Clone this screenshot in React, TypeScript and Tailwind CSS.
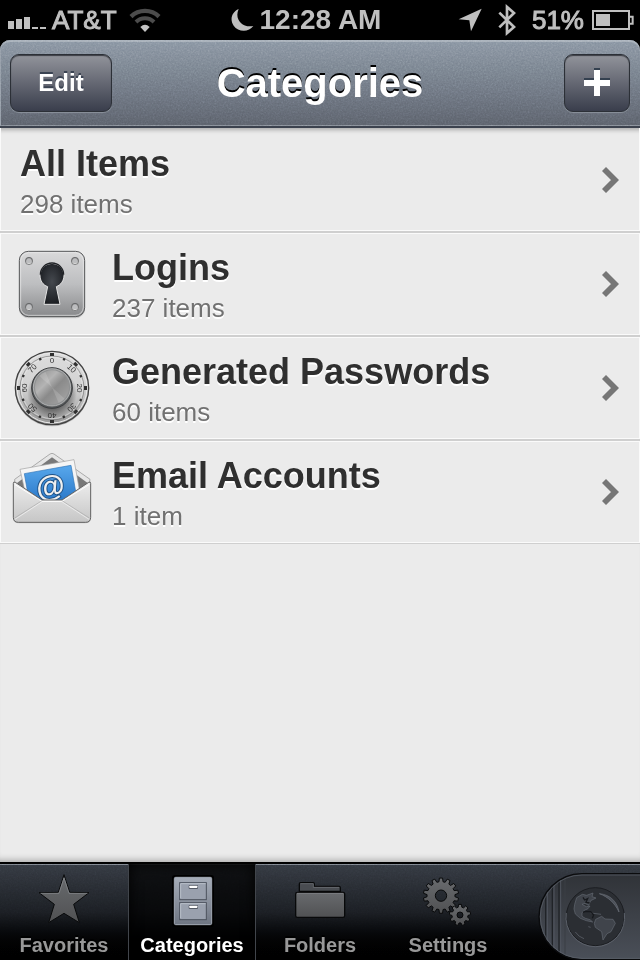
import type { ReactNode } from "react";

type IconProps = { className?: string };

function Grain({ id, opacity }: { id: string; opacity: number }) {
  return (
    <svg className="pointer-events-none absolute inset-0 h-full w-full mix-blend-overlay" aria-hidden="true">
      <filter id={id}>
        <feTurbulence type="fractalNoise" baseFrequency="0.6" numOctaves="2" seed="4" />
        <feColorMatrix type="saturate" values="0" />
      </filter>
      <rect width="100%" height="100%" filter={`url(#${id})`} opacity={opacity} />
    </svg>
  );
}

function SignalIcon() {
  return (
    <svg className="h-5 w-[38px]" viewBox="0 0 38 20" fill="#bfbfbf" aria-hidden="true">
      <path d="M0 11h6v8H0zM8 9h6v10H8zM16 7h6v12h-6zM24 17h6v2h-6zM32 17h6v2h-6z" />
    </svg>
  );
}

function WifiIcon() {
  return (
    <svg className="h-6 w-8" viewBox="390 22 96 72" fill="none" aria-hidden="true">
      <path d="M396 48 A60 60 0 0 1 480 48" stroke="#4c4c4c" strokeWidth="13" />
      <path d="M411 64 A38 38 0 0 1 465 64" stroke="#4c4c4c" strokeWidth="12" />
      <path d="M424 79 Q438 66 452 79 L438 94Z" fill="#c4c4c4" />
    </svg>
  );
}

function MoonIcon() {
  return (
    <svg className="h-6 w-[23px]" viewBox="688 22 69 72" fill="#bfbfbf" aria-hidden="true">
      <path d="M711 25 C697 55 722 83 755 76 C741 96 709 94 696 75 C683 56 691 34 711 25Z" />
    </svg>
  );
}

function LocationIcon() {
  return (
    <svg className="h-6 w-6" viewBox="415 22 72 72" fill="#bfbfbf" aria-hidden="true">
      <path d="M486 24 L454 92 L449 59 L417 56Z" />
    </svg>
  );
}

function BluetoothIcon() {
  return (
    <svg className="h-8 w-[18px]" viewBox="534 10 54 96" fill="none" stroke="#bfbfbf" strokeWidth="8" aria-hidden="true">
      <path d="M538 36 L582 79 L561 97 V19 L582 37 L538 80" />
    </svg>
  );
}

function BatteryIcon() {
  return (
    <svg className="h-5 w-[42px]" viewBox="816 27 126 60" fill="none" stroke="#bfbfbf" strokeWidth="6" aria-hidden="true">
      <path d="M819 30 H927 V84 H819Z" />
      <path d="M929 47 H938 V68 H929" />
      <path d="M828 39 H870 V75 H828Z" fill="#bfbfbf" stroke="none" />
    </svg>
  );
}

function LockIcon() {
  const screws = [[87, 78], [225, 78], [87, 216], [225, 216]];
  return (
    <svg className="size-20" viewBox="36 27 240 240" aria-hidden="true">
      <defs>
        <linearGradient id="plate" x1="0" y1="0" x2="0" y2="1">
          <stop offset="0" stopColor="#d9d9da" />
          <stop offset="0.5" stopColor="#bdbec0" />
          <stop offset="1" stopColor="#88898b" />
        </linearGradient>
        <radialGradient id="hole" cx="0.5" cy="0.45" r="0.6">
          <stop offset="0" stopColor="#45494f" />
          <stop offset="1" stopColor="#191b1f" />
        </radialGradient>
        <linearGradient id="screw" x1="0" y1="0" x2="0" y2="1">
          <stop offset="0" stopColor="#6f7072" />
          <stop offset="1" stopColor="#e8e8e8" />
        </linearGradient>
      </defs>
      <rect x="57" y="52" width="198" height="198" rx="28" fill="#000" opacity="0.13" />
      <rect x="58" y="49" width="196" height="196" rx="27" fill="url(#plate)" stroke="#57585a" strokeWidth="3" />
      <rect x="62" y="53" width="188" height="188" rx="24" fill="none" stroke="#eeeeee" strokeWidth="3" opacity="0.65" />
      {screws.map(([x, y]) => (
        <g key={`${x}-${y}`}>
          <circle cx={x} cy={y} r="11" fill="url(#screw)" stroke="#5c5d5f" strokeWidth="2" />
          <circle cx={x} cy={y - 1} r="7" fill="#bcbdbf" />
        </g>
      ))}
      <path
        d="M143 155 C128 150 120 136 120 121 A36 36 0 0 1 192 121 C192 136 183 150 169 155 L180 208 H132Z"
        fill="url(#hole)"
        stroke="#e3e3e3"
        strokeWidth="3"
      />
      <path d="M121 119 A35 35 0 0 1 191 119" fill="none" stroke="#202226" strokeWidth="4" />
    </svg>
  );
}

function DialIcon() {
  const ticks = Array.from({ length: 16 }, (_, i) => i);
  return (
    <svg className="size-20" viewBox="36 24 240 240" aria-hidden="true">
      <defs>
        <linearGradient id="dial" x1="0" y1="0" x2="0" y2="1">
          <stop offset="0" stopColor="#dddddd" />
          <stop offset="0.5" stopColor="#d2d2d2" />
          <stop offset="1" stopColor="#979797" />
        </linearGradient>
        <linearGradient id="knob" x1="0" y1="0" x2="1" y2="1">
          <stop offset="0" stopColor="#8c8c8c" />
          <stop offset="0.35" stopColor="#b4b4b4" />
          <stop offset="0.55" stopColor="#8a8a8a" />
          <stop offset="1" stopColor="#a8a8a8" />
        </linearGradient>
        <radialGradient id="knobShade">
          <stop offset="0.5" stopColor="#222" stopOpacity="0.7" />
          <stop offset="1" stopColor="#222" stopOpacity="0" />
        </radialGradient>
      </defs>
      <circle cx="156" cy="148" r="111" fill="#000" opacity="0.2" />
      <circle cx="156" cy="144" r="110" fill="url(#dial)" stroke="#414141" strokeWidth="4" />
      <circle cx="156" cy="144" r="105" fill="none" stroke="#e9e9e9" strokeWidth="3" />
      <circle cx="156" cy="144" r="96" fill="none" stroke="#777777" strokeWidth="2" />
      <circle cx="156" cy="144" r="92" fill="none" stroke="#eeeeee" strokeWidth="2" opacity="0.8" />
      {ticks.map((i) => (
        <rect
          key={i}
          x={i % 2 ? 153 : 150}
          y={i % 2 ? 47 : 39}
          width={i % 2 ? 7 : 12}
          height={i % 2 ? 7 : 9}
          fill="#303030"
          transform={`rotate(${i * 22.5} 156 144)`}
        />
      ))}
      <circle cx="156" cy="160" r="75" fill="url(#knobShade)" />
      {[0, 10, 20, 30, 40, 50, 60, 70].map((n, i) => (
        <text
          key={n}
          x="156"
          y="69"
          textAnchor="middle"
          fontSize="24"
          fontFamily="Liberation Sans, sans-serif"
          fill="#303030"
          transform={`rotate(${i * 45} 156 144)`}
        >
          {n}
        </text>
      ))}
      <circle cx="156" cy="144" r="61" fill="#55585a" stroke="#3b3d3f" strokeWidth="3" />
      <circle cx="156" cy="142" r="56" fill="#8f9192" stroke="#d0d0d0" strokeWidth="2" />
      <circle cx="156" cy="142" r="51" fill="url(#knob)" />
      <path d="M156 142 L118 108 A51 51 0 0 1 136 95Z M156 142 L194 176 A51 51 0 0 1 176 189Z" fill="#fff" opacity="0.15" />
    </svg>
  );
}

function MailIcon() {
  return (
    <svg className="size-20" viewBox="36 36 240 240" aria-hidden="true">
      <defs>
        <linearGradient id="envelope" x1="0" y1="0" x2="0" y2="1">
          <stop offset="0" stopColor="#ededed" />
          <stop offset="1" stopColor="#c6c6c6" />
        </linearGradient>
        <linearGradient id="letter" x1="0" y1="0" x2="0" y2="1">
          <stop offset="0" stopColor="#58a8ec" />
          <stop offset="1" stopColor="#2673c5" />
        </linearGradient>
      </defs>
      <path d="M44 118 L150 42 Q156 38 162 42 L270 118 L264 160 H46Z" fill="#e6e6e6" stroke="#8b8b8b" strokeWidth="2" />
      <path d="M52 128 L156 52 L262 128 L258 152 H54Z" fill="#797979" />
      <path d="M60 88 L222 59 L241 165 L190 196 H84Z" fill="#f5f5f5" stroke="#a0a0a0" strokeWidth="2" />
      <path d="M73 101 L213 76 L228 160 L180 196 H90Z" fill="url(#letter)" stroke="#3276b8" strokeWidth="2" />
      <text
        x="152"
        y="168"
        textAnchor="middle"
        fontSize="88"
        fontWeight="700"
        fontFamily="Liberation Sans, sans-serif"
        fill="#f0f0f0"
        stroke="#1f5286"
        strokeWidth="6"
        paintOrder="stroke"
        transform="rotate(-9 152 145)"
      >
        @
      </text>
      <path d="M40 130 Q40 124 46 127 L126 180 H186 L266 127 Q272 124 272 130 V234 Q272 250 256 250 H56 Q40 250 40 234Z" fill="#000" opacity="0.15" />
      <path
        d="M40 130 Q40 124 46 127 L126 180 H186 L266 127 Q272 124 272 130 V232 Q272 247 257 247 H55 Q40 247 40 232Z"
        fill="url(#envelope)"
        stroke="#626262"
        strokeWidth="3"
      />
      <path d="M45 134 L126 184 H186 L267 134" fill="none" stroke="#fff" strokeWidth="3" />
      <path d="M44 234 L126 182 M268 234 L186 182" fill="none" stroke="#a9a9a9" strokeWidth="2" />
      <path d="M45 238 L128 184 M267 238 L184 184" fill="none" stroke="#f7f7f7" strokeWidth="2" />
    </svg>
  );
}

function ChevronIcon({ className }: IconProps) {
  return (
    <svg className={className} viewBox="126 108 51 78" aria-hidden="true">
      <path d="M132 114 L165 147 L132 180" fill="none" stroke="#767676" strokeWidth="17" />
    </svg>
  );
}

function StarIcon() {
  return (
    <svg className="h-[58px] w-16" viewBox="96 42 192 174" aria-hidden="true">
      <defs>
        <linearGradient id="dim" x1="0" y1="0" x2="0" y2="1">
          <stop offset="0" stopColor="#696b6e" />
          <stop offset="1" stopColor="#505153" />
        </linearGradient>
      </defs>
      <path
        d="M192 56 L209 109 L267 110 L221 145 L238 200 L192 172 L146 200 L163 145 L117 110 L175 109Z"
        fill="url(#dim)"
        stroke="#08090a"
        strokeWidth="3"
        strokeLinejoin="round"
      />
      <path d="M122 112 H177 L192 66 L207 112 H262" fill="none" stroke="#8b8e92" strokeWidth="2" />
    </svg>
  );
}

function CabinetIcon() {
  return (
    <svg className="h-[58px] w-16" viewBox="480 42 192 174" aria-hidden="true">
      <defs>
        <linearGradient id="cabinet" x1="0" y1="0" x2="0" y2="1">
          <stop offset="0" stopColor="#a6adb9" />
          <stop offset="1" stopColor="#6f7683" />
        </linearGradient>
      </defs>
      <rect x="516" y="57" width="126" height="156" rx="9" fill="#000" />
      <rect x="523" y="64" width="112" height="142" rx="4" fill="url(#cabinet)" stroke="#a3aab6" strokeWidth="3" />
      {[80, 140].map((y) => (
        <g key={y}>
          <rect x="539" y={y} width="80" height="51" fill="#9aa1ae" stroke="#4c525d" strokeWidth="3" />
          <path d={`M542 ${y + 47} V${y + 3} H617`} fill="none" stroke="#bac0ca" strokeWidth="3" />
          <rect x="566" y={y + 7} width="28" height="12" rx="3" fill="#555b66" />
          <rect x="568" y={y + 9} width="24" height="7" rx="2" fill="#fff" />
        </g>
      ))}
    </svg>
  );
}

function FolderIcon() {
  return (
    <svg className="h-[58px] w-16" viewBox="114 42 192 174" aria-hidden="true">
      <path d="M148 106 V84 Q148 80 152 80 H189 Q193 80 193 84 V91 H267 Q271 91 271 95 V106Z" fill="#494c51" stroke="#08090a" strokeWidth="4" />
      <path d="M151 83 H190 V94 H268" fill="none" stroke="#75787d" strokeWidth="2" />
      <rect x="137" y="109" width="147" height="75" rx="5" fill="url(#dim)" stroke="#08090a" strokeWidth="4" />
      <path d="M141 112 H280" stroke="#85888d" strokeWidth="2" />
    </svg>
  );
}

function gearPath(cx: number, cy: number, outer: number, inner: number, hole: number, teeth: number) {
  const step = (Math.PI * 2) / teeth;
  const at = (r: number, a: number) => `${(cx + r * Math.sin(a)).toFixed(2)} ${(cy - r * Math.cos(a)).toFixed(2)}`;
  const points: string[] = [];
  for (let i = 0; i < teeth; i++) {
    const a = i * step;
    points.push(at(inner, a - step * 0.33), at(outer, a - step * 0.2), at(outer, a + step * 0.2), at(inner, a + step * 0.33));
  }
  return `M${points.join("L")}Z M${cx - hole} ${cy}a${hole} ${hole} 0 1 0 ${hole * 2} 0a${hole} ${hole} 0 1 0 ${-hole * 2} 0Z`;
}

function GearsIcon() {
  const gears = [gearPath(573, 119, 53, 42, 17, 14), gearPath(630, 177, 32, 24, 9, 9)];
  return (
    <svg className="h-[58px] w-16" viewBox="498 42 192 174" aria-hidden="true">
      {gears.map((d) => (
        <path key={d} d={d} fill="url(#dim)" fillRule="evenodd" stroke="#08090a" strokeWidth="3" strokeLinejoin="round" />
      ))}
    </svg>
  );
}

function GlobeIcon() {
  return (
    <svg className="h-[87px] w-[102px]" viewBox="114 54 306 261" aria-hidden="true">
      <defs>
        <linearGradient id="pill" x1="0" y1="0" x2="0" y2="1">
          <stop offset="0" stopColor="#303338" />
          <stop offset="1" stopColor="#4a4f58" />
        </linearGradient>
        <clipPath id="pillClip">
          <path d="M430 57 H246 A128 128 0 0 0 246 313 H430Z" />
        </clipPath>
      </defs>
      <path d="M430 57 H246 A128 128 0 0 0 246 313 H430Z" fill="url(#pill)" />
      <g clipPath="url(#pillClip)">
        <path d="M137 50V320M157 50V320M177 50V320" stroke="#202327" strokeWidth="4" />
        <path d="M142 50V320M162 50V320M182 50V320" stroke="#50555e" strokeWidth="3" />
        <path d="M195 50V320" stroke="#3a3e45" strokeWidth="3" />
      </g>
      <path d="M430 56 H246 A129 129 0 0 0 246 314 H430" fill="none" stroke="#0a0b0d" strokeWidth="4" />
      <path d="M430 60 H246 A125 125 0 0 0 246 310 H430" fill="none" stroke="#5d636d" strokeWidth="2" />
      <circle cx="286" cy="185" r="87" fill="#2b2e33" stroke="#1b1d21" strokeWidth="3" />
      <path d="M199 174 A88 88 0 1 0 373 174" fill="none" stroke="#5b6069" strokeWidth="3" />
      <g fill="#40444b" stroke="#646973" strokeWidth="2" strokeLinejoin="round">
        <path d="M224 148 L230 128 L247 118 L260 121 L279 114 L276 125 L288 129 L272 137 L266 151 L255 145 L246 148 L259 155 L270 153 L264 161 L251 167 L246 174 L246 184 L256 190 L270 194 L278 201 L259 197 L241 190 L226 177 L222 162Z" />
        <path d="M287 193 L305 184 L315 192 L339 193 L346 205 L333 230 L321 236 L309 255 L305 230 L286 217 L283 205Z" />
        <path d="M272 174 L288 176 L303 178" fill="none" />
      </g>
      <path d="M249 127 L254 135 L263 131 L258 142 L269 144 M249 172 L256 169 L272 170 L281 180 L277 190" fill="none" stroke="#17191d" strokeWidth="4" />
      <path d="M298 116 C331 119 352 140 357 171 C344 143 324 126 298 116Z" fill="#4d525a" stroke="#6b7079" strokeWidth="2" />
      <path d="M226 231 Q236 246 252 251 M265 215 L272 217" fill="none" stroke="#52565e" strokeWidth="3" />
    </svg>
  );
}

const categories: { title: string; count: string; icon?: ReactNode }[] = [
  { title: "All Items", count: "298 items" },
  { title: "Logins", count: "237 items", icon: <LockIcon /> },
  { title: "Generated Passwords", count: "60 items", icon: <DialIcon /> },
  { title: "Email Accounts", count: "1 item", icon: <MailIcon /> },
];

const tabs = [
  { label: "Favorites", icon: <StarIcon /> },
  { label: "Categories", icon: <CabinetIcon />, active: true },
  { label: "Folders", icon: <FolderIcon /> },
  { label: "Settings", icon: <GearsIcon /> },
];

function StatusBar() {
  return (
    <div className="grid h-10 grid-cols-[1fr_auto_1fr] items-center bg-black pr-1.5 pl-2 text-[26px] leading-10 text-[#bfbfbf]">
      <div className="flex items-center">
        <SignalIcon />
        <span className="mr-3 ml-1.5 [-webkit-text-stroke:1px_#bfbfbf]">AT&amp;T</span>
        <WifiIcon />
      </div>
      <div className="flex items-center gap-1.5 pr-[30px]">
        <MoonIcon />
        <span className="text-[28px] font-bold">12:28 AM</span>
      </div>
      <div className="flex items-center justify-end">
        <LocationIcon />
        <span className="mr-4 ml-4">
          <BluetoothIcon />
        </span>
        <span className="mr-2 [-webkit-text-stroke:1px_#bfbfbf]">51%</span>
        <BatteryIcon />
      </div>
    </div>
  );
}

const navButton =
  "flex h-[58px] items-center justify-center rounded-[9px] border border-[#2c3037] bg-linear-to-b from-[#92949b] via-[#656873] to-[#3a3e4c] text-2xl font-bold text-white shadow-[0_1px_1px_#8b929c,inset_0_1px_1px_#3b3e44] [text-shadow:0_-2px_0_#3a4352]";

function Header() {
  return (
    <div className="bg-black">
      <header className="relative h-[88px] overflow-hidden rounded-t-[10px] border-b-2 border-[#3c424e] bg-linear-to-b from-[#8793a1] to-[#5a5f69] shadow-[inset_1px_0_0_#929ba6,inset_0_2px_0_#a5aeb8,inset_0_-1px_0_#858c96]">
        <Grain id="headerGrain" opacity={0.35} />
        <div className="relative grid h-full grid-cols-[1fr_auto_1fr] items-center px-[10px]">
          <button type="button" className={`${navButton} w-[102px]`}>
            Edit
          </button>
          <h1 className="text-[40px] leading-12 font-bold text-white [text-shadow:0_-2px_0_#000]">Categories</h1>
          <button type="button" aria-label="Add" className={`${navButton} w-[66px] justify-self-end`}>
            <svg className="size-8" viewBox="0 0 32 32" aria-hidden="true">
              <path d="M13 1h6v10h10v6H19v10h-6V17H3v-6h10z" fill="#34404f" />
              <path d="M13 3h6v10h10v6H19v10h-6V19H3v-6h10z" fill="#fff" />
            </svg>
          </button>
        </div>
      </header>
    </div>
  );
}

function CategoryList() {
  return (
    <main className="flex-1 bg-[#ebebeb] shadow-[inset_0_6px_4px_-4px_#aaa,inset_0_-8px_6px_-6px_#aaa]">
      <ul>
        {categories.map(({ title, count, icon }, i) => (
          <li key={title} className={`h-[104px] border-b border-[#cfcfcf] ${i > 0 ? "border-t" : ""}`}>
            <a
              href="#"
              className={`flex h-full items-center pr-[21px] ${i > 0 ? "shadow-[inset_0_0_0_1px_#fafafa]" : "shadow-[inset_1px_-1px_0_#fafafa,inset_-1px_0_0_#fafafa]"}`}
            >
              {icon && <span className="mr-2 flex w-[104px] shrink-0 justify-center">{icon}</span>}
              <span className={`min-w-0 flex-1 pt-2 ${icon ? "" : "pl-5"}`}>
                <span className="block truncate text-4xl leading-10 font-bold text-[#2f2f2f] [text-shadow:0_2px_0_#fff]">{title}</span>
                <span className="block text-[26px] leading-10 text-[#717171] [text-shadow:0_2px_0_#fff]">{count}</span>
              </span>
              <ChevronIcon className="h-[26px] w-[17px] shrink-0" />
            </a>
          </li>
        ))}
      </ul>
    </main>
  );
}

function TabBar() {
  return (
    <nav className="relative h-[98px] border-t-2 border-black bg-linear-to-b from-[#343941] via-[#1b1e23] to-black shadow-[inset_0_1px_0_#7c838d]">
      <Grain id="tabGrain" opacity={0.3} />
      <div className="relative grid h-full grid-cols-5">
        {tabs.map(({ label, icon, active }) => (
          <button
            key={label}
            type="button"
            aria-current={active ? "page" : undefined}
            className={`flex flex-col items-center gap-[5px] pt-[6px] text-xl leading-6 font-bold ${
              active
                ? "border-x border-[#41454b] bg-black/70 text-white shadow-[inset_0_0_14px_#000]"
                : "text-[#989898] [text-shadow:0_-2px_0_#000]"
            }`}
          >
            {icon}
            {label}
          </button>
        ))}
        <button type="button" aria-label="Browser" className="self-end justify-self-end">
          <GlobeIcon />
        </button>
      </div>
    </nav>
  );
}

export default function App() {
  return (
    <div className="flex min-h-screen flex-col bg-black font-['Liberation_Sans',Arial,sans-serif]">
      <StatusBar />
      <Header />
      <CategoryList />
      <TabBar />
    </div>
  );
}
